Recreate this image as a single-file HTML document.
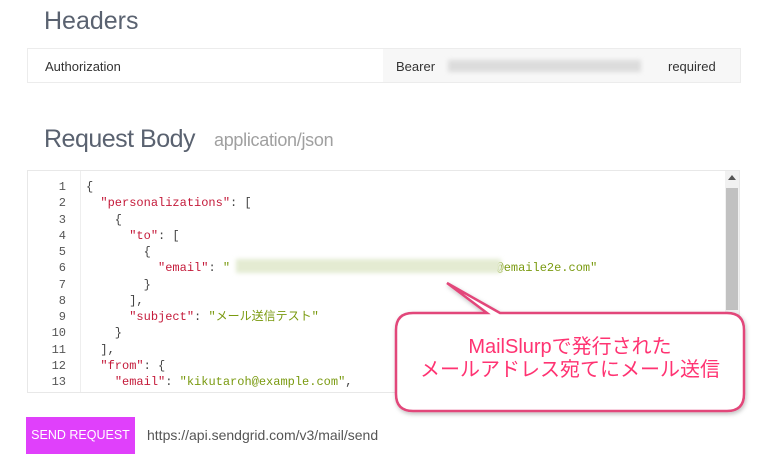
<!DOCTYPE html>
<html><head><meta charset="utf-8"><style>
body{margin:0;width:768px;height:474px;background:#fff;position:relative;overflow:hidden;font-family:"Liberation Sans","Noto Sans CJK JP",sans-serif;}
.h{position:absolute;color:#5a6270;font-weight:300;}
.code{position:absolute;left:27px;top:170px;width:713px;height:223px;border:1px solid #e8e8e8;box-sizing:border-box;overflow:hidden;background:#fff;}
.gut{position:absolute;left:0;top:0;width:52px;height:100%;border-right:1px solid #eee;}
.ln{position:absolute;font:12px "Liberation Mono",monospace;color:#444;line-height:16.25px;}
.nums{left:0;width:38px;text-align:right;top:8px;color:#555;}
.src{left:58px;top:8px;white-space:pre;}
.k{color:#c41a3a}.s{color:#7a9a10}
</style></head><body>
<div class="h" style="left:44px;top:7px;font-size:25px;">Headers</div>
<div style="position:absolute;left:27px;top:48px;width:714px;height:35px;border:1px solid #ececec;box-sizing:border-box;background:#fff;">
 <div style="position:absolute;left:355px;top:0;right:0;height:100%;background:#f7f7f7;"></div>
 <div style="position:absolute;left:17px;top:10px;font-size:13px;color:#333;">Authorization</div>
 <div style="position:absolute;left:368px;top:10px;font-size:13px;color:#333;">Bearer</div>
 <div style="position:absolute;left:420px;top:11px;width:193px;height:12px;background:#dcdcdc;filter:blur(2px);"></div>
 <div style="position:absolute;left:640px;top:10px;font-size:13px;color:#333;">required</div>
</div>
<div class="h" style="left:44px;top:125px;font-size:25px;letter-spacing:-0.5px;">Request Body</div>
<div class="h" style="left:214px;top:130px;font-size:18px;color:#a0a0a0;letter-spacing:-0.3px;">application/json</div>
<div class="code">
 <div class="gut"></div>
 <div class="ln nums">1<br>2<br>3<br>4<br>5<br>6<br>7<br>8<br>9<br>10<br>11<br>12<br>13<br>14</div>
 <div class="ln src">{
  <span class="k">"personalizations"</span>: [
    {
      <span class="k">"to"</span>: [
        {
          <span class="k">"email"</span>: <span class="s">"                                     @emaile2e.com"</span>
        }
      ],
      <span class="k">"subject"</span>: <span class="s">"メール送信テスト"</span>
    }
  ],
  <span class="k">"from"</span>: {
    <span class="k">"email"</span>: <span class="s">"kikutaroh@example.com"</span>,
    <span class="k">"name"</span>: <span class="s">"...."</span></div>
 <div style="position:absolute;left:208px;top:88px;width:265px;height:14px;background:#e4ebd2;filter:blur(2px);"></div>
 <div style="position:absolute;right:0;top:0;width:14px;height:100%;background:#f1f1f1;"></div>
 <div style="position:absolute;right:1px;top:17px;width:12px;height:122px;background:#c1c1c1;"></div>
 <div style="position:absolute;right:3px;top:4px;width:0;height:0;border-left:4px solid transparent;border-right:4px solid transparent;border-bottom:5px solid #555;"></div>
</div>
<svg style="position:absolute;left:0;top:0" width="768" height="474">
 <defs><filter id="sh" x="-10%" y="-10%" width="130%" height="140%"><feDropShadow dx="1" dy="2" stdDeviation="2" flood-color="#000" flood-opacity=".25"/></filter></defs>
 <path d="M413 313 H487 L447 283 L500 313 H727 Q744 313 744 330 V394 Q744 411 727 411 H413 Q396 411 396 394 V330 Q396 313 413 313 Z" fill="#fff" stroke="#e2467a" stroke-width="2.5" filter="url(#sh)"/>
</svg>
<div style="position:absolute;left:396px;top:336px;width:348px;text-align:center;color:#ff3372;font-size:20px;line-height:23px;">MailSlurpで発行された<br>メールアドレス宛てにメール送信</div>
<div style="position:absolute;left:26px;top:417px;width:109px;height:37px;background:#e040fb;color:#fff;font-size:12.5px;line-height:37px;text-align:center;">SEND REQUEST</div>
<div style="position:absolute;left:147px;top:427px;font-size:14px;color:#555;">https://api.sendgrid.com/v3/mail/send</div>
</body></html>
